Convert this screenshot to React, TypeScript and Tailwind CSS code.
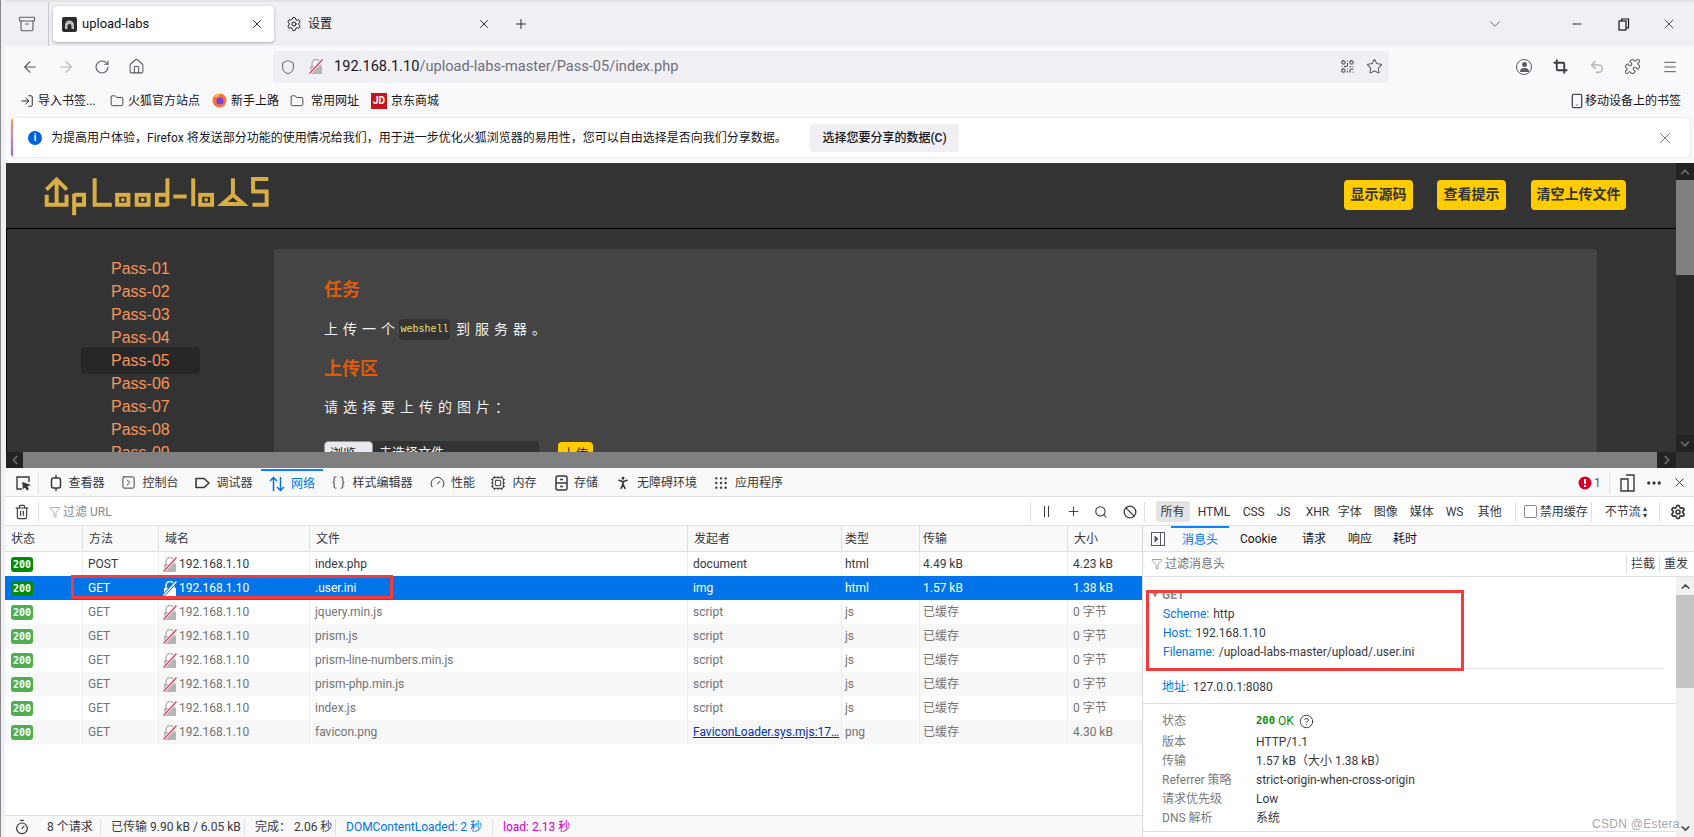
import React from 'react';
import { Settings, X, Plus, ChevronDown, ChevronUp, ChevronLeft, ChevronRight, Minus, ArrowLeft, ArrowRight, RotateCw, House, Shield, QrCode, Star, Crop, Undo2, Puzzle, Menu, Folder, Smartphone, LogIn, Trash2, Funnel, Search, Ban, Braces, Gauge, Cpu, PersonStanding, Grip, SquareChevronRight, Ellipsis, CircleHelp, Timer, Archive } from 'lucide-react';

const Sep = () => <div className="w-px h-[20px] bg-[#e0e0e2] shrink-0" />;

function InsecureLock({ selected = false }: { selected?: boolean }) {
  const body = selected ? '#ffffff' : '#b5b5b8';
  const slash = selected ? '#ffffff' : '#e0425f';
  return (
    <svg width="14" height="15" viewBox="0 0 14 15" className="shrink-0">
      <path d="M3 7V4.5a4 4 0 0 1 8 0V7" fill="none" stroke={body} strokeWidth="1.5" />
      <rect x="1" y="7" width="12" height="8" fill={body} />
      <line x1="0.5" y1="14.5" x2="13.5" y2="0.5" stroke={selected ? '#0074e8' : '#ffffff'} strokeWidth="3" />
      <line x1="0.5" y1="14.5" x2="13.5" y2="0.5" stroke={slash} strokeWidth="1.5" />
    </svg>
  );
}

function Logo() {
  const c = '#d9ae45';
  return (
    <svg width="233" height="43" viewBox="60 28 700 130" className="shrink-0" aria-label="upload-labs logo" role="img">
      <g fill="none" stroke={c} strokeWidth="12">
        <path d="M74 72 L105 42 L136 72 M105 42 V118 M75 88 V118 H135 V88" />
        <path d="M158 85 V150 M158 88 H188 V118 H158" />
        <path d="M220 38 V118 H272" />
        <rect x="288" y="88" width="34" height="30" />
        <rect x="347" y="88" width="36" height="30" />
        <path d="M440 88 H408 V118 H440 M440 38 V122" />
        <path d="M458 93 H498" />
        <path d="M518 38 V122" />
        <rect x="539" y="88" width="36" height="30" />
        <path d="M638 38 V88 M606 116 L638 88 L670 116 Z" />
        <path d="M745 40 H699 V78 H740 V118 H697" />
      </g>
      <rect x="360" y="98" width="10" height="10" fill={c} />
      <rect x="552" y="98" width="10" height="10" fill={c} />
      <rect x="300" y="98" width="10" height="10" fill={c} />
    </svg>
  );
}

const passes = ['Pass-01', 'Pass-02', 'Pass-03', 'Pass-04', 'Pass-05', 'Pass-06', 'Pass-07', 'Pass-08', 'Pass-09'];

const rows = [
  { m: 'POST', f: 'index.php', i: 'document', t: 'html', x: '4.49 kB', s: '4.23 kB', fresh: true },
  { m: 'GET', f: '.user.ini', i: 'img', t: 'html', x: '1.57 kB', s: '1.38 kB', fresh: true, sel: true },
  { m: 'GET', f: 'jquery.min.js', i: 'script', t: 'js', x: '已缓存', s: '0 字节' },
  { m: 'GET', f: 'prism.js', i: 'script', t: 'js', x: '已缓存', s: '0 字节' },
  { m: 'GET', f: 'prism-line-numbers.min.js', i: 'script', t: 'js', x: '已缓存', s: '0 字节' },
  { m: 'GET', f: 'prism-php.min.js', i: 'script', t: 'js', x: '已缓存', s: '0 字节' },
  { m: 'GET', f: 'index.js', i: 'script', t: 'js', x: '已缓存', s: '0 字节' },
  { m: 'GET', f: 'favicon.png', i: 'FaviconLoader.sys.mjs:17…', t: 'png', x: '已缓存', s: '4.30 kB', link: true },
];

const headers = ['状态', '方法', '域名', '文件', '发起者', '类型', '传输', '大小'];

function Tool({ icon, label, active = false, w }: { icon: React.ReactNode; label: string; active?: boolean; w: string }) {
  return (
    <div className={`${w} h-full flex items-center justify-center gap-[6px] shrink-0 whitespace-nowrap ${active ? 'text-[#0074e8] border-t-2 border-[#0a84ff]' : 'text-[#38383d]'}`}>
      {icon}
      <span>{label}</span>
    </div>
  );
}

function Info2({ k, v, h = 'h-[19px]' }: { k: string; v: React.ReactNode; h?: string }) {
  return (
    <div className={`${h} flex items-center`}>
      <span className="w-[94px] text-[#7a7a7a] shrink-0">{k}</span>
      <span className="text-[#38383d] flex items-center">{v}</span>
    </div>
  );
}

export default function App() {
  return (
    <div className="relative w-[1694px] h-[837px] overflow-hidden flex bg-[#f0f0f4] text-[12px] text-[#15141a] font-['Roboto','Noto_Sans_CJK_SC',sans-serif]">
      <div className="w-[5px] shrink-0 bg-[#f0f0f4] border-l border-[#8a8a8a]" />
      <div className="w-[1689px] flex flex-col">
        <div className="h-[2px] bg-[#e3e3e6] shrink-0" />
        {/* tab strip */}
        <div className="h-[44px] shrink-0 flex items-center bg-[#f0f0f4]">
          <div className="w-[44px] h-full flex items-center justify-center border-r border-[#c8c8cc]">
            <Archive size={18} strokeWidth={1.5} className="text-[#5b5b66]" />
          </div>
          <div className="ml-[4px] w-[221px] h-[36px] bg-white rounded-[4px] shadow-[0_1px_3px_rgba(0,0,0,0.3)] flex items-center pl-[9px] pr-[10px]">
            <svg width="15" height="15" viewBox="0 0 15 15" className="shrink-0"><rect width="15" height="15" rx="2" fill="#2b2b2b" /><path d="M3 12V8a4.5 4.5 0 0 1 9 0v4h-2.5V9a2 2 0 0 0-4 0v3z" fill="#bdbdbd" /></svg>
            <span className="ml-[5px] text-[13px]">upload-labs</span>
            <X size={14} strokeWidth={1.5} className="ml-auto" />
          </div>
          <div className="w-[225px] h-[36px] flex items-center pl-[12px] pr-[8px]">
            <Settings size={16} strokeWidth={1.5} />
            <span className="ml-[6px] text-[12px]">设置</span>
            <X size={14} strokeWidth={1.5} className="ml-auto" />
          </div>
          <Plus size={16} strokeWidth={1.3} className="ml-[14px]" />
          <ChevronDown size={18} strokeWidth={1.2} className="ml-[957px] text-[#5b5b66]" />
          <Minus size={14} strokeWidth={1.5} className="ml-[66px]" />
          <svg width="12" height="13" viewBox="0 0 12 13" className="ml-[34px]" fill="none" stroke="#15141a" strokeWidth="1.2"><rect x="1" y="3" width="7" height="9" /><path d="M3.5 3V1H10.5V10H8" /></svg>
          <X size={16} strokeWidth={1.1} className="ml-[31px]" />
        </div>
        {/* nav bar */}
        <div className="h-[41px] shrink-0 bg-[#f9f9fb] flex items-center text-[#5b5b66]">
          <ArrowLeft size={18} strokeWidth={1.5} className="ml-[16px]" />
          <ArrowRight size={18} strokeWidth={1.5} className="ml-[18px] text-[#b5b5ba]" />
          <RotateCw size={16} strokeWidth={1.6} className="ml-[19px]" />
          <House size={17} strokeWidth={1.5} className="ml-[18px]" />
          <div className="ml-[128px] w-[1116px] h-[32px] rounded-[4px] bg-[#f0f0f4] flex items-center pl-[7px] pr-[6px]">
            <Shield size={16} strokeWidth={1.5} />
            <span className="ml-[12px] w-[16px] h-[16px] flex items-center justify-center"><InsecureLock /></span>
            <span className="ml-[10px] text-[14.6px] text-[#15141a]">192.168.1.10<span className="text-[#6f6f78]">/upload-labs-master/Pass-05/index.php</span></span>
            <QrCode size={15} strokeWidth={1.5} className="ml-auto text-[#2b2b33]" />
            <Star size={17} strokeWidth={1.5} className="ml-[11px]" />
          </div>
          <div className="ml-[127px] w-[16px] h-[16px] rounded-full border-[1.5px] border-[#5b5b66] flex flex-col items-center justify-center overflow-hidden shrink-0">
            <div className="w-[5px] h-[5px] rounded-full bg-[#5b5b66]" />
            <div className="w-[9px] h-[4px] rounded-t-full bg-[#5b5b66] mt-[1px]" />
          </div>
          <Crop size={15} strokeWidth={3} className="ml-[21px] text-[#3a3a44]" />
          <Undo2 size={16} strokeWidth={2.6} className="ml-[21px] text-[#b8b8bd]" />
          <Puzzle size={17} strokeWidth={1.5} className="ml-[19px]" />
          <Menu size={16} strokeWidth={1.5} className="ml-[21px]" />
        </div>
        {/* bookmarks */}
        <div className="h-[27px] shrink-0 bg-[#f9f9fb] flex items-center">
          <LogIn size={14} strokeWidth={1.5} className="ml-[15px]" />
          <span className="ml-[4px] w-[64px]">导入书签...</span>
          <Folder size={14} strokeWidth={1.3} className="ml-[8px]" />
          <span className="ml-[4px] w-[72px]">火狐官方站点</span>
          <svg width="15" height="15" viewBox="0 0 15 15" className="ml-[12px] shrink-0"><circle cx="7.5" cy="7.5" r="7" fill="#ff7139" /><circle cx="8" cy="8" r="3.6" fill="#7542e5" /><path d="M2 4 Q5 0 9 1 Q6 2 6 4 Z" fill="#ffbd4f" /></svg>
          <span className="ml-[4px] w-[48px]">新手上路</span>
          <Folder size={14} strokeWidth={1.3} className="ml-[11px]" />
          <span className="ml-[7px] w-[48px]">常用网址</span>
          <div className="ml-[12px] w-[16px] h-[16px] bg-[#c4161c] text-white text-[10px] font-bold flex items-center justify-center leading-none shrink-0">JD</div>
          <span className="ml-[4px]">京东商城</span>
          <Smartphone size={16} strokeWidth={2} className="ml-auto text-[#4a4a55]" />
          <span className="mr-[11px] w-[98px]">移动设备上的书签</span>
        </div>
        {/* notification */}
        <div className="h-[49px] shrink-0 bg-[#f9f9fb] pl-[6px] pr-[4px] pt-[4px] pb-[6px]">
          <div className="h-[39px] bg-white rounded-[4px] shadow-[0_0_2px_rgba(0,0,0,0.2)] flex items-center overflow-hidden">
            <div className="w-[2px] h-full bg-gradient-to-b from-[#ff9f40] to-[#9059ff] shrink-0" />
            <div className="ml-[15px] w-[14px] h-[14px] rounded-full bg-[#0060df] text-white flex items-center justify-center text-[10px] font-bold leading-none shrink-0">i</div>
            <span className="ml-[9px] w-[759px] shrink-0">为提高用户体验，Firefox 将发送部分功能的使用情况给我们，用于进一步优化火狐浏览器的易用性，您可以自由选择是否向我们分享数据。</span>
            <div className="w-[149px] h-[28px] rounded-[4px] bg-[#f0f0f4] flex items-center justify-center font-medium shrink-0">选择您要分享的数据(C)</div>
            <X size={18} strokeWidth={1.1} className="ml-auto mr-[16px] text-[#5b5b66]" />
          </div>
        </div>
        {/* web page */}
        <div className="h-[305px] shrink-0 ml-[1px] flex flex-col overflow-hidden bg-[#333333] font-['Liberation_Sans','Noto_Sans_CJK_SC',sans-serif]">
          <div className="flex-1 min-h-0 flex">
            <div className="flex-1 min-w-0 flex flex-col overflow-hidden">
              <div className="h-[66px] shrink-0 border-b border-black flex items-center">
                <div className="ml-[35px] mb-[-2px]"><Logo /></div>
                <div className="ml-auto flex items-center mr-[50px] text-[14px] font-bold text-[#333333] mb-[2px]">
                  <div className="w-[69px] h-[30px] bg-[#ffcc00] rounded-[4px] flex items-center justify-center">显示源码</div>
                  <div className="ml-[24px] w-[69px] h-[30px] bg-[#ffcc00] rounded-[4px] flex items-center justify-center">查看提示</div>
                  <div className="ml-[25px] w-[95px] h-[30px] bg-[#ffcc00] rounded-[4px] flex items-center justify-center">清空上传文件</div>
                </div>
              </div>
              <div className="flex-1 min-h-0 border-l border-black pt-[20px] flex overflow-hidden">
                <div className="ml-[74px] w-[119px] pt-[8px] shrink-0 text-[16px] text-[#f7935a]">
                  {passes.map((p) => (
                    <div key={p} className={p === 'Pass-05' ? 'h-[27px] -my-[2px] pl-[30px] flex items-center rounded-[4px] bg-[#272727]' : 'h-[23px] pl-[30px] flex items-center'}>{p}</div>
                  ))}
                </div>
                <div className="ml-[74px] w-[1323px] h-[400px] shrink-0 bg-[#444444] rounded-t-[4px] pl-[50px] pt-[30px] text-[#f2f2f2] text-[14px] tracking-[5px]">
                  <div className="text-[18px] leading-[22px] font-bold text-[#e05a0c] tracking-normal">任务</div>
                  <div className="mt-[18px] h-[21px] flex items-center">
                    上传一个
                    <span className="w-[51px] h-[21px] bg-[#333333] rounded-[4px] flex items-center justify-center text-[10px] tracking-normal text-[#e6e66a] font-['Liberation_Mono',monospace] mr-[6px] -ml-[1px]">webshell</span>
                    到服务器。
                  </div>
                  <div className="mt-[18px] text-[18px] leading-[22px] font-bold text-[#e05a0c] tracking-normal">上传区</div>
                  <div className="mt-[17px] h-[21px] flex items-center">请选择要上传的图片：</div>
                  <div className="mt-[23px] flex items-start tracking-normal text-[13px]">
                    <div className="w-[215px] h-[30px] bg-[#333333] rounded-[4px] flex overflow-hidden">
                      <div className="w-[49px] h-full bg-[#e9e9ed] text-[#15141a] rounded-[4px] border border-[#8f8f9d] text-center leading-[24px]">浏览...</div>
                      <span className="ml-[6px] leading-[24px] text-[#f2f2f2]">未选择文件</span>
                    </div>
                    <div className="ml-[19px] mt-[1px] w-[35px] h-[28px] bg-[#ffcc00] rounded-[4px] text-[#333333] text-center leading-[24px]">上传</div>
                  </div>
                </div>
              </div>
            </div>
            <div className="w-[18px] shrink-0 bg-[#2b2b2b] flex flex-col text-[#6e6e6e]">
              <div className="h-[17px] bg-[#232323] flex items-center justify-center"><ChevronUp size={14} strokeWidth={3} /></div>
              <div className="h-[95px] bg-[#7f7f7f]" />
              <div className="flex-1" />
              <div className="h-[17px] bg-[#232323] flex items-center justify-center"><ChevronDown size={14} strokeWidth={3} /></div>
            </div>
          </div>
          <div className="h-[16px] shrink-0 flex bg-[#333333]">
            <div className="w-[17px] bg-[#232323] flex items-center justify-center text-[#6e6e6e]"><ChevronLeft size={14} strokeWidth={3} /></div>
            <div className="w-[1634px] bg-[#7f7f7f]" />
            <div className="w-[19px] bg-[#232323] flex items-center justify-center text-[#6e6e6e]"><ChevronRight size={14} strokeWidth={3} /></div>
          </div>
        </div>
        {/* devtools */}
        <div className="h-[369px] shrink-0 bg-white flex flex-col">
          <div className="h-[29px] shrink-0 border-b border-[#e0e0e2] bg-[#f9f9fa] flex items-center pt-[1px]">
            <svg width="16" height="16" viewBox="0 0 16 16" className="ml-[10px] shrink-0" fill="none" stroke="#38383d" strokeWidth="1.4"><path d="M7 14H2V2h12v5" /><path d="M8 8l6 2-2.5 1 1.5 3-1 .5-1.5-3L8.5 13z" fill="#38383d" /></svg>
            <div className="ml-[7px] mr-[3px]"><Sep /></div>
            <Tool w="w-[71px]" label="查看器" icon={<svg width="12" height="16" viewBox="0 0 12 16" fill="none" stroke="#38383d" strokeWidth="1.5"><rect x="1.5" y="3" width="9" height="10" rx="2" /><path d="M6 0v3M6 13v3" /></svg>} />
            <Tool w="w-[74px]" label="控制台" icon={<SquareChevronRight size={15} strokeWidth={1.5} />} />
            <Tool w="w-[74px]" label="调试器" icon={<svg width="15" height="14" viewBox="0 0 15 14" fill="none" stroke="#38383d" strokeWidth="1.6"><path d="M1 2.5h8l5 4.500-5 4.500H1z" strokeLinejoin="round" /></svg>} />
            <Tool w="w-[62px]" active label="网络" icon={<svg width="16" height="16" viewBox="0 0 16 16" fill="none" stroke="#0074e8" strokeWidth="1.5"><path d="M4.500 15V1.500M1 5l3.500-3.500L8 5M11.500 1v13.500M8 11l3.500 3.500L15 11" /></svg>} />
            <Tool w="w-[98px]" label="样式编辑器" icon={<Braces size={15} strokeWidth={1.6} />} />
            <Tool w="w-[63px]" label="性能" icon={<Gauge size={15} strokeWidth={1.6} />} />
            <Tool w="w-[59px]" label="内存" icon={<Cpu size={16} strokeWidth={1.5} />} />
            <Tool w="w-[67px]" label="存储" icon={<svg width="13" height="16" viewBox="0 0 13 16" fill="none" stroke="#38383d" strokeWidth="1.5"><rect x="1" y="1" width="11" height="14" rx="2" /><path d="M1 8h11M5 4.500h3M5 11.500h3" /></svg>} />
            <Tool w="w-[92px]" label="无障碍环境" icon={<PersonStanding size={16} strokeWidth={2.4} />} />
            <Tool w="w-[92px]" label="应用程序" icon={<Grip size={16} strokeWidth={1.6} />} />
            <svg width="14" height="14" viewBox="0 0 14 14" className="ml-[784px] shrink-0"><circle cx="7" cy="7" r="6.500" fill="#d70022" /><rect x="6" y="3" width="2" height="5" fill="#fff" /><rect x="6" y="9" width="2" height="2" fill="#fff" /></svg>
            <span className="ml-[2px] text-[#5b5b66]">1</span>
            <div className="ml-[8px]"><Sep /></div>
            <svg width="15" height="18" viewBox="0 0 15 18" className="ml-[10px] shrink-0" fill="none" stroke="#38383d" strokeWidth="1.4"><path d="M6 1h8v16H6M1 5h7v12H1z" /></svg>
            <Ellipsis size={18} strokeWidth={2.4} className="ml-[10px] text-[#38383d]" />
            <X size={15} strokeWidth={1.5} className="ml-[9px] text-[#38383d]" />
          </div>
          <div className="h-[29px] shrink-0 border-b border-[#e0e0e2] bg-white flex items-center text-[#38383d] pt-[1px]">
            <Trash2 size={16} strokeWidth={1.7} className="ml-[9px]" />
            <div className="ml-[8px]"><Sep /></div>
            <Funnel size={12} strokeWidth={1.3} className="ml-[10px] text-[#8a8a8a]" />
            <span className="ml-[2px] text-[#8a8a8a]">过滤 URL</span>
            <div className="ml-[918px]"><Sep /></div>
            <div className="ml-[13px] w-[5px] h-[11px] border-x border-[#38383d]" />
            <Plus size={15} strokeWidth={1.5} className="ml-[17px]" />
            <Search size={14} strokeWidth={1.8} className="ml-[13px]" />
            <Ban size={14} strokeWidth={2.2} className="ml-[15px]" />
            <div className="ml-[7px]"><Sep /></div>
            <div className="ml-[11px] w-[34px] h-[21px] bg-[#e4e4e4] rounded-[2px] flex items-center justify-center">所有</div>
            <span className="ml-[8px] w-[45px]">HTML</span>
            <span className="w-[34px]">CSS</span>
            <span className="w-[29px]">JS</span>
            <span className="w-[32px]">XHR</span>
            <span className="w-[36px]">字体</span>
            <span className="w-[36px]">图像</span>
            <span className="w-[36px]">媒体</span>
            <span className="w-[32px]">WS</span>
            <span className="w-[37px]">其他</span>
            <Sep />
            <div className="ml-[8px] w-[13px] h-[13px] border-[1.5px] border-[#8a8a96] rounded-[2px] shrink-0" />
            <span className="ml-[3px] w-[48px] whitespace-nowrap">禁用缓存</span>
            <div className="ml-[3px]"><Sep /></div>
            <span className="ml-[13px]">不节流</span>
            <span className="ml-[2px] text-[8px] leading-[7px] flex flex-col"><span>▴</span><span>▾</span></span>
            <div className="ml-[12px]"><Sep /></div>
            <Settings size={16} strokeWidth={2.6} className="ml-[10px]" />
          </div>
          <div className="flex-1 min-h-0 flex">
            <div className="w-[1137px] shrink-0 flex flex-col">
              <div className="h-[26px] shrink-0 grid grid-cols-[78px_76px_151px_378px_154px_78px_148px_74px] bg-[#f9f9fa] border-b border-[#e0e0e2] text-[#38383d]">
                {headers.map((h, i) => (
                  <div key={h} className={`${i === 5 || i === 6 ? 'pl-[3px]' : 'pl-[6px]'} flex items-center border-r border-[#e0e0e2] last:border-r-0`}>{h}</div>
                ))}
              </div>
              <div className="shrink-0">
                {rows.map((r, idx) => {
                  const bg = r.sel ? 'bg-[#0074e8] text-white' : idx % 2 === 1 ? 'bg-[#f7f7f7]' : 'bg-white';
                  const txt = r.sel ? 'text-white' : r.fresh ? 'text-[#38383d]' : 'text-[#737373]';
                  const line = r.sel ? 'border-[#0074e8]' : 'border-[#eeeeee]';
                  return (
                    <div key={idx} className={`h-[24px] grid grid-cols-[78px_76px_151px_378px_154px_78px_148px_74px] ${bg} ${txt}`}>
                      <div className={`pl-[6px] flex items-center border-r ${line}`}>
                        <span className={`w-[22px] h-[15px] rounded-[3px] text-white text-[10px] font-bold flex items-center justify-center font-['DejaVu_Sans_Mono',monospace] ${r.fresh ? 'bg-[#058b00]' : 'bg-[#4fae4f]'}`}>200</span>
                      </div>
                      <div className={`pl-[5px] flex items-center border-r ${line}`}>{r.m}</div>
                      <div className={`pl-[4px] flex items-center gap-[2px] border-r ${line}`}><InsecureLock selected={r.sel} />192.168.1.10</div>
                      <div className={`pl-[5px] flex items-center border-r ${line}`}>{r.f}</div>
                      <div className={`pl-[5px] flex items-center border-r ${line} overflow-hidden whitespace-nowrap`}>
                        {r.link ? <span className="underline text-[#0033aa]">{r.i}</span> : r.i}
                      </div>
                      <div className={`pl-[3px] flex items-center border-r ${line}`}>{r.t}</div>
                      <div className={`pl-[3px] flex items-center border-r ${line}`}>{r.x}</div>
                      <div className="pl-[5px] flex items-center">{r.s}</div>
                    </div>
                  );
                })}
              </div>
              <div className="flex-1" />
              <div className="h-[22px] shrink-0 border-t border-[#e0e0e2] bg-[#f9f9fa] flex items-center text-[#38383d]">
                <Timer size={16} strokeWidth={1.8} className="ml-[9px]" />
                <span className="ml-[17px] w-[53px]">8 个请求</span>
                <div className="h-[16px] w-px bg-[#e0e0e2]" />
                <span className="ml-[10px] w-[133px]">已传输 9.90 kB / 6.05 kB</span>
                <div className="h-[16px] w-px bg-[#e0e0e2]" />
                <span className="ml-[10px] w-[80px]">完成： 2.06 秒</span>
                <div className="h-[16px] w-px bg-[#e0e0e2]" />
                <span className="ml-[10px] w-[146px] text-[#0074e8]">DOMContentLoaded: 2 秒</span>
                <div className="h-[16px] w-px bg-[#e0e0e2]" />
                <span className="ml-[10px] text-[#d000c0]">load: 2.13 秒</span>
              </div>
            </div>
            <div className="flex-1 min-w-0 border-l border-[#d7d7db] flex flex-col">
              <div className="h-[26px] shrink-0 bg-[#f9f9fa] border-b border-[#e0e0e2] flex items-center text-[#15141a]">
                <svg width="14" height="14" viewBox="0 0 14 14" className="ml-[8px] shrink-0" fill="none" stroke="#5b5b66" strokeWidth="1"><rect x="0.500" y="0.500" width="13" height="13" /><path d="M9.500 1v12" /><path d="M4 4l3 3-3 3z" fill="#5b5b66" /></svg>
                <div className="ml-[6px] w-[58px] h-full border-t-2 border-[#0a84ff] text-[#0074e8] flex items-center justify-center">消息头</div>
                <span className="ml-[11px] w-[62px]">Cookie</span>
                <span className="w-[46px]">请求</span>
                <span className="w-[45px]">响应</span>
                <span>耗时</span>
              </div>
              <div className="h-[25px] shrink-0 border-b border-[#e0e0e2] flex items-center text-[#737373]">
                <Funnel size={12} strokeWidth={1.3} className="ml-[8px]" />
                <span className="ml-[2px]">过滤消息头</span>
                <div className="ml-auto h-[18px] w-px bg-[#e0e0e2]" />
                <span className="ml-[4px] text-[#38383d]">拦截</span>
                <div className="ml-[4px] h-[18px] w-px bg-[#e0e0e2]" />
                <span className="ml-[4px] mr-[6px] text-[#38383d]">重发</span>
              </div>
              <div className="flex-1 min-h-0 flex">
                <div className="flex-1 min-w-0 overflow-hidden text-[#38383d]">
                  <div className="h-[14px] mt-[11px] ml-[8px] flex items-center font-bold text-[#8a8a8a]"><span className="text-[8px] mr-[3px]">▼</span>GET</div>
                  <div className="mt-[2px] pl-[20px]">
                    <div className="h-[19px] flex items-center"><span className="text-[#0074e8]">Scheme:</span><span className="ml-[4px]">http</span></div>
                    <div className="h-[19px] flex items-center"><span className="text-[#0074e8]">Host:</span><span className="ml-[4px]">192.168.1.10</span></div>
                    <div className="h-[19px] flex items-center"><span className="text-[#0074e8]">Filename:</span><span className="ml-[4px]">/upload-labs-master/upload/.user.ini</span></div>
                  </div>
                  <div className="mt-[7px] ml-[20px] mr-[12px] h-px bg-[#e0e0e2]" />
                  <div className="mt-[8px] pl-[19px] h-[19px] flex items-center"><span className="text-[#0074e8]">地址:</span><span className="ml-[4px]">127.0.0.1:8080</span></div>
                  <div className="mt-[7px] h-px bg-[#e0e0e2]" />
                  <div className="pl-[19px] mt-[6px]">
                    <Info2 h="h-[22px]" k="状态" v={<><span className="text-[#058b00] font-bold text-[10.5px] font-['DejaVu_Sans_Mono',monospace]">200</span><span className="ml-[3px] text-[#058b00]">OK</span><CircleHelp size={15} strokeWidth={1.5} className="ml-[5px]" /></>} />
                    <Info2 k="版本" v="HTTP/1.1" />
                    <Info2 k="传输" v="1.57 kB（大小 1.38 kB）" />
                    <Info2 k="Referrer 策略" v="strict-origin-when-cross-origin" />
                    <Info2 k="请求优先级" v="Low" />
                    <Info2 k="DNS 解析" v="系统" />
                  </div>
                  <div className="mt-[4px] h-px bg-[#e0e0e2]" />
                </div>
                <div className="w-[18px] shrink-0 bg-[#f1f1f1] flex flex-col text-[#505050]">
                  <div className="h-[18px] flex items-center justify-center"><ChevronUp size={13} strokeWidth={3} /></div>
                  <div className="h-[93px] bg-[#c4c4c4]" />
                  <div className="flex-1" />
                  <div className="h-[18px] flex items-center justify-center"><ChevronDown size={13} strokeWidth={3} /></div>
                </div>
              </div>
            </div>
          </div>
        </div>
      </div>
      {/* annotation boxes and watermark */}
      <div className="absolute left-[71px] top-[575px] w-[322px] h-[24px] border-[3px] border-[#f53a3a]" />
      <div className="absolute left-[1146px] top-[590px] w-[318px] h-[81px] border-[3px] border-[#f53a3a]" />
      <div className="absolute left-[1592px] top-[815px] whitespace-nowrap text-[12px] tracking-[0.3px] text-[#a8a8a8] font-['Liberation_Sans',sans-serif]">CSDN @Estera.</div>
    </div>
  );
}
